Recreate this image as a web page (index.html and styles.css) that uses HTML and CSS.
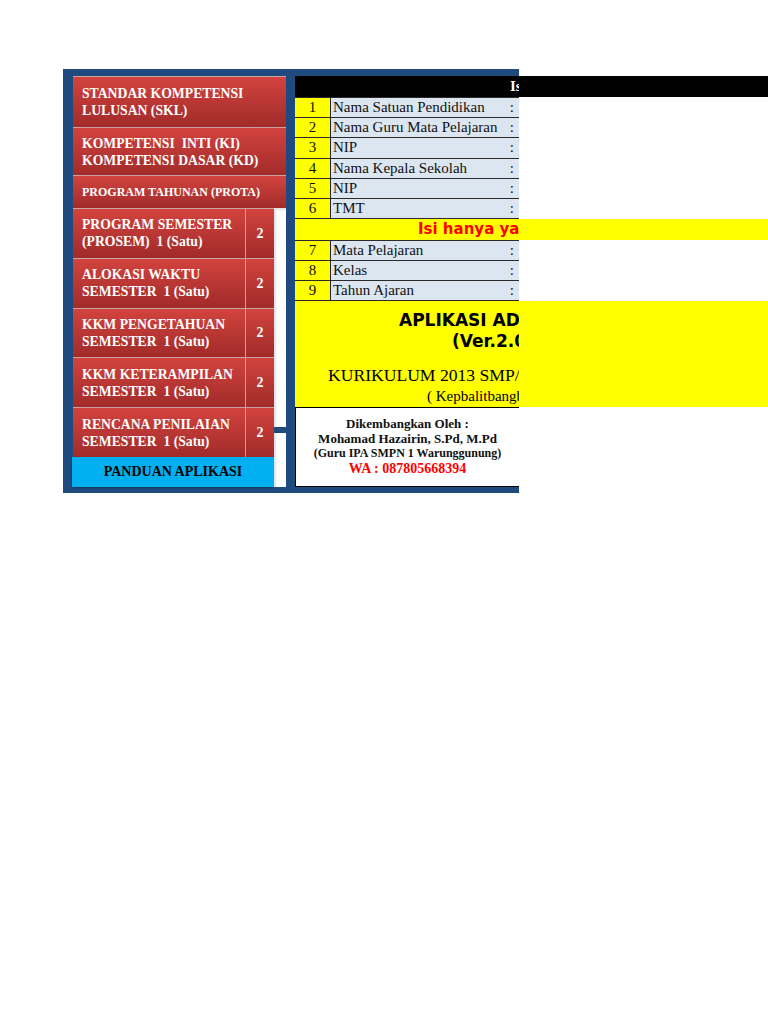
FILE: index.html
```html
<!DOCTYPE html>
<html>
<head>
<meta charset="utf-8">
<link rel="stylesheet" href="styles.css">
</head>
<body>
<div class="frame">
  <div class="menu">
    <div class="btn b1">STANDAR KOMPETENSI<br>LULUSAN (SKL)</div>
    <div class="btn b2">KOMPETENSI&nbsp; INTI (KI)<br>KOMPETENSI DASAR (KD)</div>
    <div class="btn b3">PROGRAM TAHUNAN (PROTA)</div>
    <div class="lower">
      <div class="list">
        <div class="item"><div class="btn name">PROGRAM SEMESTER<br>(PROSEM)&nbsp; 1 (Satu)</div><div class="btn num">2</div></div>
        <div class="item"><div class="btn name">ALOKASI WAKTU<br>SEMESTER&nbsp; 1 (Satu)</div><div class="btn num">2</div></div>
        <div class="item"><div class="btn name">KKM PENGETAHUAN<br>SEMESTER&nbsp; 1 (Satu)</div><div class="btn num">2</div></div>
        <div class="item"><div class="btn name">KKM KETERAMPILAN<br>SEMESTER&nbsp; 1 (Satu)</div><div class="btn num">2</div></div>
        <div class="item"><div class="btn name">RENCANA PENILAIAN<br>SEMESTER&nbsp; 1 (Satu)</div><div class="btn num">2</div></div>
        <div class="guide">PANDUAN APLIKASI</div>
      </div>
      <div class="strip"><div class="band"></div></div>
    </div>
  </div>
  <div class="panel">
    <div class="bar head"><div class="clip">Isian Identitas</div><div class="fill"></div></div>
    <div class="row"><div class="no">1</div><div class="lbl"><span>Nama Satuan Pendidikan</span><span>:</span></div></div>
    <div class="row"><div class="no">2</div><div class="lbl"><span>Nama Guru Mata Pelajaran</span><span>:</span></div></div>
    <div class="row"><div class="no">3</div><div class="lbl"><span>NIP</span><span>:</span></div></div>
    <div class="row"><div class="no">4</div><div class="lbl"><span>Nama Kepala Sekolah</span><span>:</span></div></div>
    <div class="row"><div class="no">5</div><div class="lbl"><span>NIP</span><span>:</span></div></div>
    <div class="row last"><div class="no">6</div><div class="lbl"><span>TMT</span><span>:</span></div></div>
    <div class="bar note"><div class="clip">Isi hanya yang berwarna kuning</div><div class="fill"></div></div>
    <div class="row"><div class="no">7</div><div class="lbl"><span>Mata Pelajaran</span><span>:</span></div></div>
    <div class="row"><div class="no">8</div><div class="lbl"><span>Kelas</span><span>:</span></div></div>
    <div class="row last"><div class="no">9</div><div class="lbl"><span>Tahun Ajaran</span><span>:</span></div></div>
    <div class="bar title">
      <div class="clip">
        <div class="t1">APLIKASI ADMINISTRASI GURU</div>
        <div class="t2">(Ver.2.0)</div>
        <div class="t3">KURIKULUM 2013 SMP/MTs</div>
        <div class="t4">( Kepbalitbangbuk No. 018/H/KR/2020 )</div>
      </div>
      <div class="fill"></div>
    </div>
    <div class="credit">
      <div class="c1">Dikembangkan Oleh :</div>
      <div class="c2">Mohamad Hazairin, S.Pd, M.Pd</div>
      <div class="c3">(Guru IPA SMPN 1 Warunggunung)</div>
      <div class="c4">WA : 087805668394</div>
    </div>
  </div>
</div>
</body>
</html>
```

FILE: styles.css
```css
html, body {
  margin: 0;
  padding: 0;
  background: #ffffff;
  overflow-x: hidden;
}

body {
  width: 768px;
  height: 1024px;
  font-family: "Liberation Serif", "Times New Roman", serif;
}

.frame {
  margin: 69px 0 0 63px;
  width: 456px;
  height: 424px;
  box-sizing: border-box;
  padding: 7px 0 0 10px;
  background: #1f4a7e;
  display: flex;
  align-items: flex-start;
  gap: 9px;
}

.menu {
  width: 213px;
  flex-shrink: 0;
  display: flex;
  flex-direction: column;
}

.btn {
  box-sizing: border-box;
  display: flex;
  align-items: center;
  padding-left: 9px;
  color: #ffffff;
  font-family: "Liberation Serif", serif;
  font-weight: bold;
  font-size: 13.7px;
  line-height: 17px;
  background: linear-gradient(#d2433e, #a12b2a);
  border-top: 1px solid #c9a3a3;
}

.b1 { height: 51px; }
.b2 { height: 48px; }
.b3 { height: 33px; font-size: 12px; }

.lower {
  display: flex;
  height: 279px;
}

.list {
  width: 201px;
  display: flex;
  flex-direction: column;
}

.item {
  display: flex;
  height: 49.8px;
}

.name {
  width: 172px;
}

.num {
  width: 29px;
  padding-left: 0;
  justify-content: center;
  font-size: 14px;
  border-left: 1px solid #d59a9a;
}

.guide {
  height: 30px;
  width: 202px;
  margin-left: -1px;
  box-sizing: border-box;
  background: #00b0f0;
  color: #000000;
  font-weight: bold;
  font-size: 14px;
  display: flex;
  align-items: center;
  justify-content: center;
  box-shadow: 0 1px 2px rgba(0, 0, 0, 0.35);
}

.strip {
  width: 12px;
  background: #ffffff;
  display: flex;
  flex-direction: column;
  box-shadow: inset 2px 2px 2px rgba(0, 0, 0, 0.12);
}

.band {
  margin-top: 219px;
  height: 6px;
  background: #1f4a7e;
}

.panel {
  width: 224px;
  flex-shrink: 0;
  display: flex;
  flex-direction: column;
}

.bar {
  width: 473px;
  display: flex;
}

.clip {
  width: 224px;
  flex-shrink: 0;
  overflow: hidden;
  white-space: nowrap;
  box-sizing: border-box;
}

.fill {
  flex: 1;
}

.head {
  height: 21px;
  background: #000000;
  color: #ffffff;
  font-weight: bold;
  font-size: 15px;
  line-height: 21px;
}

.head .clip {
  padding-left: 215px;
}

.row {
  display: flex;
  height: 20.2px;
  box-sizing: border-box;
  border-top: 1px solid #2a2a2a;
  font-size: 15px;
  line-height: 19px;
  color: #111111;
}

.row.last {
  border-bottom: 1px solid #2a2a2a;
  height: 21px;
}

.no {
  width: 36px;
  background: #ffff00;
  border-right: 1px solid #222222;
  text-align: center;
  box-sizing: border-box;
}

.lbl {
  flex: 1;
  background: #dce6f1;
  display: flex;
  justify-content: space-between;
  padding: 0 5px 0 2px;
}

.note {
  height: 21px;
  background: #ffff00;
  color: #ff0000;
  font-family: "DejaVu Sans", sans-serif;
  font-weight: bold;
  font-size: 15px;
  line-height: 21px;
}

.note .clip {
  padding-left: 123px;
}

.title {
  height: 106px;
  background: #ffff00;
  color: #000000;
}

.title .clip {
  padding-top: 9px;
}

.t1, .t2 {
  font-family: "DejaVu Sans", sans-serif;
  font-weight: bold;
  font-size: 17px;
  line-height: 21px;
}

.t1 { padding-left: 104px; }
.t2 { padding-left: 157px; }

.t3 {
  margin-top: 12px;
  padding-left: 33px;
  font-size: 17.6px;
  line-height: 22px;
}

.t4 {
  padding-left: 132px;
  font-size: 15px;
  line-height: 20px;
}

.credit {
  height: 80px;
  width: 224px;
  box-sizing: border-box;
  background: #ffffff;
  border: 1px solid #000000;
  border-right: none;
  text-align: center;
  font-weight: bold;
  padding-top: 9px;
  color: #111111;
}

.c1, .c2 { font-size: 13px; line-height: 14.5px; }
.c3 { font-size: 12px; line-height: 14.5px; }
.c4 { font-size: 14px; line-height: 15px; color: #ff0000; }
```
